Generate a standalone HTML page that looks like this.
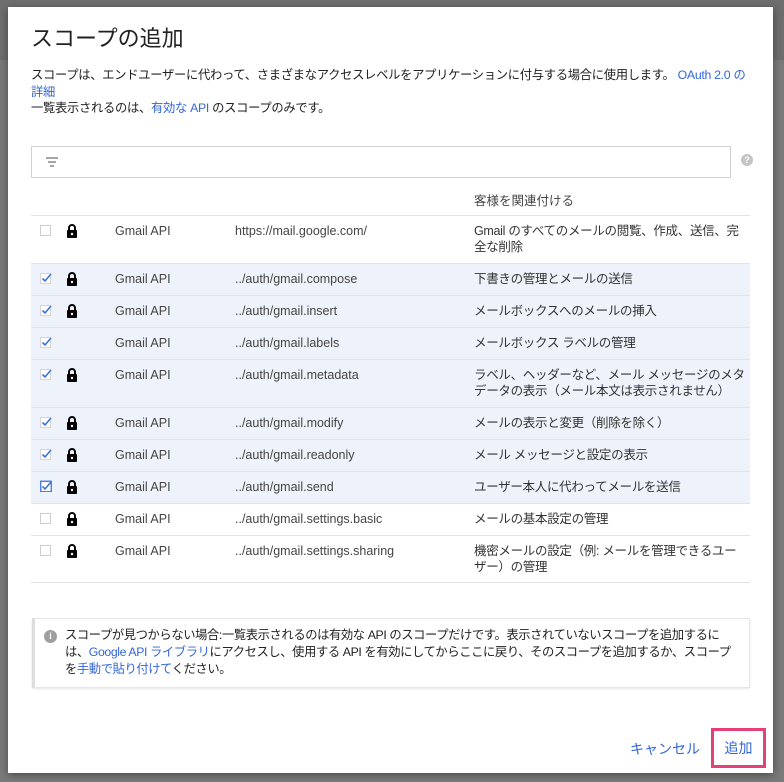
<!DOCTYPE html>
<html><head><meta charset="utf-8"><style>
*{box-sizing:border-box;margin:0;padding:0}
body{width:784px;height:782px;background:#7a7a7a;font-family:"Liberation Sans","Noto Sans CJK JP",sans-serif;position:relative;overflow:hidden;color:#222}
.dlg{position:absolute;left:8px;top:7px;width:765px;height:766px;background:#fff;box-shadow:0 2px 8px rgba(0,0,0,.4)}
h1{position:absolute;left:23px;top:14px;font-size:22px;font-weight:normal;color:#212121}
.p{position:absolute;left:23px;font-size:12.3px;line-height:17px;color:#212121;letter-spacing:-0.3px}
a{color:#3367d6;text-decoration:none}
.search{position:absolute;left:23px;top:139px;width:700px;height:32px;border:1px solid #d0d0d0}
.help{position:absolute;left:733px;top:147px;width:12px;height:12px;border-radius:50%;background:#c4c4c4;color:#fff;font-size:9px;text-align:center;line-height:12px;font-weight:bold}
.tbl{position:absolute;left:23px;top:178px;width:719px;font-size:12.5px;color:#444}
.row{position:relative;border-top:1px solid #e3e3e3;height:32px}
.row.sel{background:#eef2fb}
.row.two{height:48px}
.row div{position:absolute;top:7px;line-height:16px}
.cb{left:9px;top:9px!important;width:11px;height:11px;border:1px solid #cfcfcf;background:#fff}
.ck{position:absolute;left:9px;top:8px;width:13px;height:12px}
.lk{left:35px;top:8px!important;width:12px;height:14px}
.c1{left:84px}.c2{left:204px}.c3{left:443px;width:272px;color:#333;letter-spacing:-0.3px}
.info{position:absolute;left:24px;top:611px;width:718px;height:70px;border:1px solid #e6e6e6;border-left:3px solid #ddd;box-shadow:0 1px 2px rgba(0,0,0,.1);font-size:12.3px;line-height:17px;padding:8px 8px 0 30px;color:#222;letter-spacing:-0.4px}
.ii{position:absolute;left:9px;top:11px;width:13px;height:13px;border-radius:50%;background:#9e9e9e;color:#fff;font-size:9px;text-align:center;line-height:13px;font-weight:bold;letter-spacing:0}
.btn{position:absolute;top:732px;font-size:14px;color:#3367d6}
.add{position:absolute;left:703px;top:721px;width:55px;height:40px;border:3px solid #e5407a;font-size:14px;color:#3367d6;text-align:center;line-height:34px}
</style></head><body>
<div style="position:absolute;left:0;top:0;width:784px;height:60px;background:#6e6e6e"></div>
<svg width="0" height="0" style="position:absolute"><defs>
<symbol id="lock" viewBox="0 0 12 14"><path d="M3 6V4a3 3 0 0 1 6 0v2" fill="none" stroke="#000" stroke-width="2"/><rect x="1" y="6" width="10" height="8" rx="1"/><circle cx="6" cy="10" r="1.2" fill="#fff"/></symbol>
<symbol id="chk" viewBox="0 0 13 12"><rect x="0.5" y="1.5" width="10" height="10" fill="#fff" stroke="#d4d4d4"/><path d="M2.5 6.5l2.5 2.5 6-7" fill="none" stroke="#3b73d9" stroke-width="1.6"/></symbol>
<symbol id="chk2" viewBox="0 0 13 12"><rect x="0.75" y="1.25" width="10.5" height="10.5" fill="#fff" stroke="#3b73d9" stroke-width="1.3"/><path d="M2.5 6.5l2.5 2.5 6-7" fill="none" stroke="#3b73d9" stroke-width="1.6"/></symbol>
</defs></svg>
<div class="dlg">
<h1>スコープの追加</h1>
<div class="p" style="top:60px;width:730px">スコープは、エンドユーザーに代わって、さまざまなアクセスレベルをアプリケーションに付与する場合に使用します。 <a>OAuth 2.0 の<br>詳細</a></div>
<div class="p" style="top:93px">一覧表示されるのは、<a>有効な API</a> のスコープのみです。</div>
<div class="search"><svg style="position:absolute;left:13px;top:9px" width="14" height="12"><path d="M1 2h12M3 6h8M5 10h4" stroke="#888" stroke-width="1.5"/></svg></div>
<div class="help">?</div>
<div class="tbl">
<div style="height:30px;position:relative"><div style="position:absolute;left:443px;top:5px;color:#444">客様を関連付ける</div></div>
<div class="row two"><div class="cb"></div><svg class="lk" style="position:absolute;left:35px;top:8px"><use href="#lock"/></svg><div class="c1">Gmail API</div><div class="c2">https://mail.google.com/</div><div class="c3">Gmail のすべてのメールの閲覧、作成、送信、完全な削除</div></div>
<div class="row sel"><svg class="ck"><use href="#chk"/></svg><svg class="lk" style="position:absolute;left:35px;top:8px"><use href="#lock"/></svg><div class="c1">Gmail API</div><div class="c2">../auth/gmail.compose</div><div class="c3">下書きの管理とメールの送信</div></div>
<div class="row sel"><svg class="ck"><use href="#chk"/></svg><svg class="lk" style="position:absolute;left:35px;top:8px"><use href="#lock"/></svg><div class="c1">Gmail API</div><div class="c2">../auth/gmail.insert</div><div class="c3">メールボックスへのメールの挿入</div></div>
<div class="row sel"><svg class="ck"><use href="#chk"/></svg><div class="c1">Gmail API</div><div class="c2">../auth/gmail.labels</div><div class="c3">メールボックス ラベルの管理</div></div>
<div class="row sel two"><svg class="ck"><use href="#chk"/></svg><svg class="lk" style="position:absolute;left:35px;top:8px"><use href="#lock"/></svg><div class="c1">Gmail API</div><div class="c2">../auth/gmail.metadata</div><div class="c3">ラベル、ヘッダーなど、メール メッセージのメタデータの表示（メール本文は表示されません）</div></div>
<div class="row sel"><svg class="ck"><use href="#chk"/></svg><svg class="lk" style="position:absolute;left:35px;top:8px"><use href="#lock"/></svg><div class="c1">Gmail API</div><div class="c2">../auth/gmail.modify</div><div class="c3">メールの表示と変更（削除を除く）</div></div>
<div class="row sel"><svg class="ck"><use href="#chk"/></svg><svg class="lk" style="position:absolute;left:35px;top:8px"><use href="#lock"/></svg><div class="c1">Gmail API</div><div class="c2">../auth/gmail.readonly</div><div class="c3">メール メッセージと設定の表示</div></div>
<div class="row sel"><svg class="ck"><use href="#chk2"/></svg><svg class="lk" style="position:absolute;left:35px;top:8px"><use href="#lock"/></svg><div class="c1">Gmail API</div><div class="c2">../auth/gmail.send</div><div class="c3">ユーザー本人に代わってメールを送信</div></div>
<div class="row"><div class="cb"></div><svg class="lk" style="position:absolute;left:35px;top:8px"><use href="#lock"/></svg><div class="c1">Gmail API</div><div class="c2">../auth/gmail.settings.basic</div><div class="c3">メールの基本設定の管理</div></div>
<div class="row two" style="border-bottom:1px solid #e3e3e3"><div class="cb"></div><svg class="lk" style="position:absolute;left:35px;top:8px"><use href="#lock"/></svg><div class="c1">Gmail API</div><div class="c2">../auth/gmail.settings.sharing</div><div class="c3">機密メールの設定（例: メールを管理できるユーザー）の管理</div></div>
</div>
<div class="info"><div class="ii">i</div>スコープが見つからない場合:一覧表示されるのは有効な API のスコープだけです。表示されていないスコープを追加するには、<a>Google API ライブラリ</a>にアクセスし、使用する API を有効にしてからここに戻り、そのスコープを追加するか、スコープを<a>手動で貼り付けて</a>ください。</div>
<div class="btn" style="left:622px">キャンセル</div>
<div class="add">追加</div>
</div>
</body></html>
